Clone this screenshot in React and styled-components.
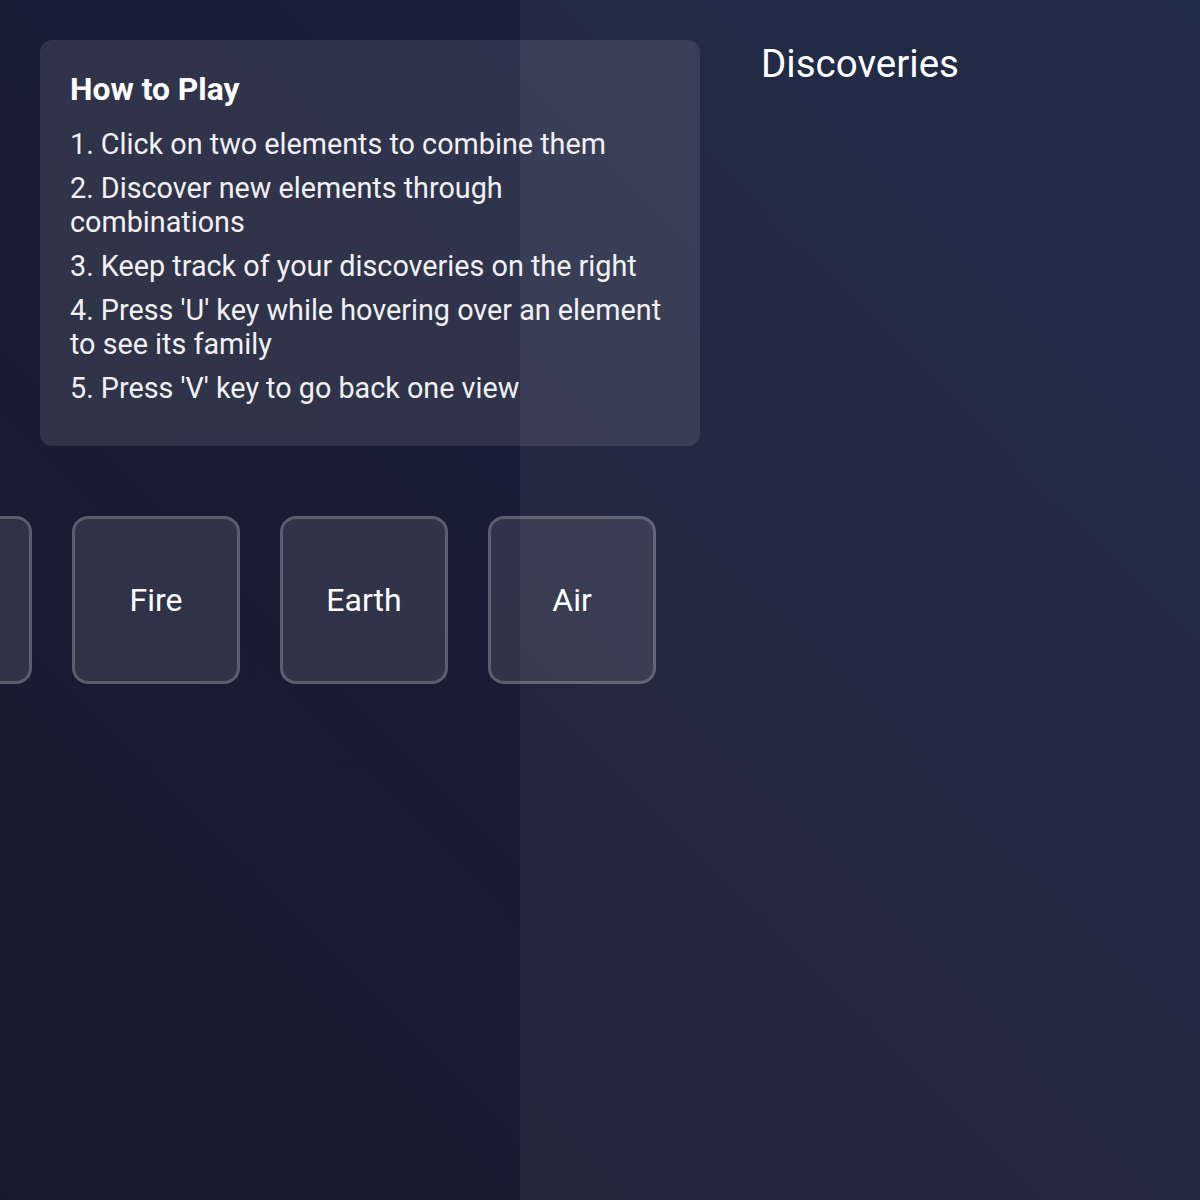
import styled, { createGlobalStyle } from "styled-components";

const GlobalStyle = createGlobalStyle`
  html, body {
    margin: 0;
    padding: 0;
    overflow: hidden;
  }
  body {
    font-family: Roboto, "Liberation Sans", Arial, sans-serif;
    color: #fff;
  }
  * {
    box-sizing: border-box;
  }
`;

const StyledApp = styled.div`
  display: grid;
  grid-template-columns: 520px 1fr;
  min-height: 100vh;
  height: 1200px;
  background: linear-gradient(45deg, #1a1a2e 0%, #16213e 100%);
  overflow: hidden;
`;

const StyledMain = styled.main`
  position: relative;
  z-index: 1;
  display: flex;
  flex-direction: column;
  padding: 40px;
  min-width: 0;
`;

const StyledCard = styled.section`
  width: 660px;
  flex-shrink: 0;
  padding: 30px 30px 31px;
  border-radius: 12px;
  background-color: rgba(255, 255, 255, 0.1);
`;

const StyledTitle = styled.h2`
  margin: 0 0 19px;
  font-size: 31.8px;
  font-weight: 700;
  line-height: 38px;
`;

const StyledList = styled.ol`
  list-style: none;
  margin: 0;
  padding: 0;
`;

const StyledItem = styled.li`
  font-size: 28.75px;
  line-height: 34px;
  margin-bottom: 10px;
  color: #f2f2f5;
`;

const StyledRow = styled.div`
  display: flex;
  justify-content: center;
  gap: 40px;
  margin-top: 70px;
`;

const StyledElement = styled.button`
  flex-shrink: 0;
  width: 168px;
  height: 168px;
  display: flex;
  align-items: center;
  justify-content: center;
  border: 3.5px solid rgba(255, 255, 255, 0.21);
  border-radius: 16px;
  background-color: rgba(255, 255, 255, 0.1);
  color: #fff;
  font-family: inherit;
  font-size: 32px;
  cursor: pointer;
`;

const StyledSidebar = styled.aside`
  background-color: rgba(255, 255, 255, 0.05);
  padding: 42px 20px;
  text-align: center;
`;

const StyledSideTitle = styled.h2`
  margin: 0;
  font-size: 38.5px;
  font-weight: 400;
  line-height: 44px;
`;

const rules = [
  "1. Click on two elements to combine them",
  "2. Discover new elements through combinations",
  "3. Keep track of your discoveries on the right",
  "4. Press 'U' key while hovering over an element to see its family",
  "5. Press 'V' key to go back one view",
];

const elements = ["Water", "Fire", "Earth", "Air"];

const App = () => {
  return (
    <>
      <GlobalStyle />
      <StyledApp>
        <StyledMain>
          <StyledCard>
            <StyledTitle>How to Play</StyledTitle>
            <StyledList>
              {rules.map((rule) => (
                <StyledItem key={rule}>{rule}</StyledItem>
              ))}
            </StyledList>
          </StyledCard>
          <StyledRow>
            {elements.map((name) => (
              <StyledElement key={name}>{name}</StyledElement>
            ))}
          </StyledRow>
        </StyledMain>
        <StyledSidebar>
          <StyledSideTitle>Discoveries</StyledSideTitle>
        </StyledSidebar>
      </StyledApp>
    </>
  );
};

export default App;
